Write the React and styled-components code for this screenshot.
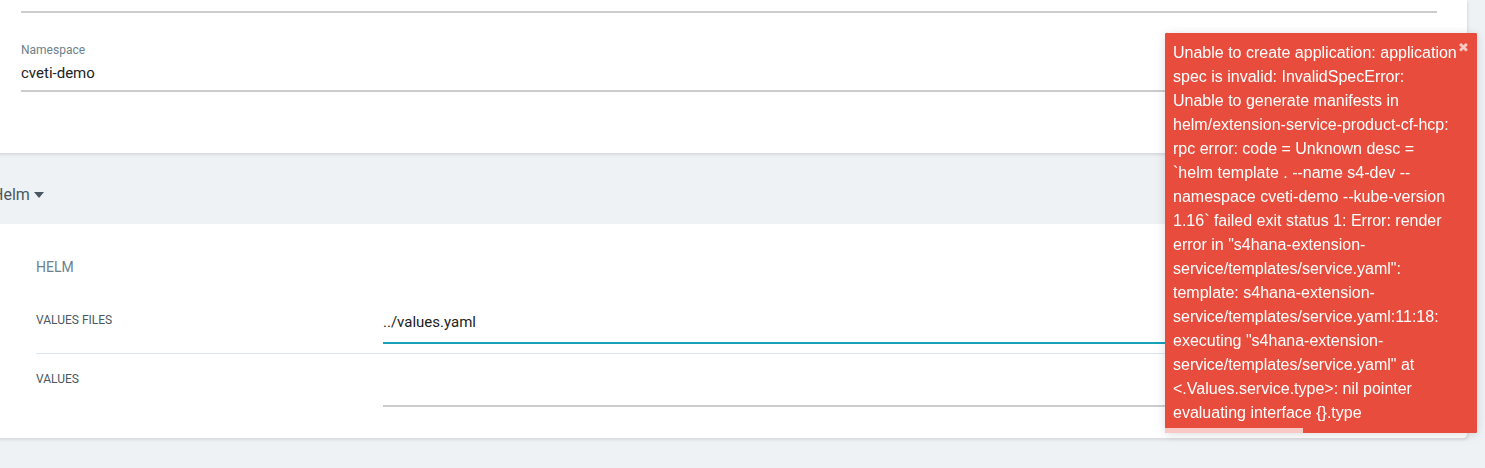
import React from 'react'
import styled, { createGlobalStyle } from 'styled-components'

const GlobalStyle = createGlobalStyle`
  html, body {
    margin: 0;
    padding: 0;
    background: #eff2f5;
    overflow: hidden;
  }
  body {
    font-family: Roboto, "Liberation Sans", Arial, sans-serif;
    color: #363c4a;
  }
`

const Page = styled.div`
  min-height: 468px;
  margin: 0 18px 0 -24px;
`

const Panel = styled.div`
  background: #fff;
  border-radius: ${props => (props.top ? '0 0 4px 4px' : '4px')};
  box-shadow: 1px 2px 3px rgba(0, 0, 0, 0.1);
  padding: ${props => props.padding};
`

const PrevField = styled.div`
  height: 11px;
  border-bottom: 2px solid #cccccc;
`

const Field = styled.div`
  margin-top: 30px;
  padding-bottom: 7px;
  border-bottom: 2px solid #cccccc;
`

const FieldLabel = styled.div`
  font-size: 12px;
  line-height: 14px;
  color: #6d7f8b;
`

const FieldValue = styled.div`
  margin-top: 6px;
  font-size: 15px;
  line-height: 20px;
  color: #222;
`

const SectionHeader = styled.div`
  padding: 32px 0 19px 16px;
  display: flex;
  align-items: center;
  gap: 4px;
  font-size: 16px;
  line-height: 20px;
  color: #495763;
`

const Caret = () => (
  <svg width="10" height="6" viewBox="0 0 10 6">
    <path d="M0 0 L10 0 L5 6 Z" fill="#495763" />
  </svg>
)

const Title = styled.div`
  font-size: 14px;
  line-height: 20px;
  color: #6d7f8b;
  margin-bottom: 18px;
`

const Row = styled.div`
  display: grid;
  grid-template-columns: 347px 1fr;
  padding: 17px 0 ${props => props.pb}px;
  border-bottom: ${props => (props.divider ? '1px solid #dee6eb' : 'none')};
`

const RowLabel = styled.div`
  font-size: 12px;
  line-height: 16px;
  color: #495763;
  text-transform: uppercase;
`

const Input = styled.div`
  font-size: 15px;
  line-height: 20px;
  color: #222;
  min-height: ${props => props.h}px;
  padding-bottom: 10px;
  border-bottom: 2px solid ${props => (props.focused ? '#17a2b8' : '#cccccc')};
`

const Toast = styled.div`
  position: fixed;
  top: 33px;
  right: 8px;
  width: 312px;
  box-sizing: border-box;
  display: flex;
  padding: 8px;
  background: #e74c3c;
  color: #fff;
  border-radius: 1px;
  box-shadow: 0 1px 10px rgba(0, 0, 0, 0.1), 0 2px 15px rgba(0, 0, 0, 0.05);
  font-family: "Liberation Sans", Arial, sans-serif;
  overflow: hidden;
`

const ToastBody = styled.div`
  flex: 1;
  font-size: 16px;
  line-height: 24px;
`

const Close = styled.span`
  align-self: flex-start;
  font-family: "DejaVu Sans", sans-serif;
  font-size: 13px;
  font-weight: bold;
  line-height: 14px;
  opacity: 0.7;
  margin-left: 1px;
`

const Progress = styled.div`
  position: absolute;
  left: 0;
  bottom: 0;
  height: 5px;
  width: ${props => props.width}px;
  background: rgba(255, 255, 255, 0.7);
`

const message =
  'Unable to create application: application spec is invalid: InvalidSpecError: Unable to generate manifests in helm/extension-service-product-cf-hcp: rpc error: code = Unknown desc = `helm template . --name s4-dev --namespace cveti-demo --kube-version 1.16` failed exit status 1: Error: render error in "s4hana-extension-service/templates/service.yaml": template: s4hana-extension-service/templates/service.yaml:11:18: executing "s4hana-extension-service/templates/service.yaml" at <.Values.service.type>: nil pointer evaluating interface {}.type'

export default function App() {
  return (
    <>
      <GlobalStyle />
      <Page>
        <Panel top padding="0 30px 61px 45px">
          <PrevField />
          <Field>
            <FieldLabel>Namespace</FieldLabel>
            <FieldValue>cveti-demo</FieldValue>
          </Field>
        </Panel>
        <SectionHeader>
          Helm <Caret />
        </SectionHeader>
        <Panel padding="33px 36px 31px 60px">
          <Title>HELM</Title>
          <Row divider pb={9}>
            <RowLabel>Values Files</RowLabel>
            <Input focused h={20}>../values.yaml</Input>
          </Row>
          <Row pb={0}>
            <RowLabel>Values</RowLabel>
            <Input h={24} />
          </Row>
        </Panel>
      </Page>
      <Toast>
        <ToastBody>{message}</ToastBody>
        <Close>✖</Close>
        <Progress width={138} />
      </Toast>
    </>
  )
}
